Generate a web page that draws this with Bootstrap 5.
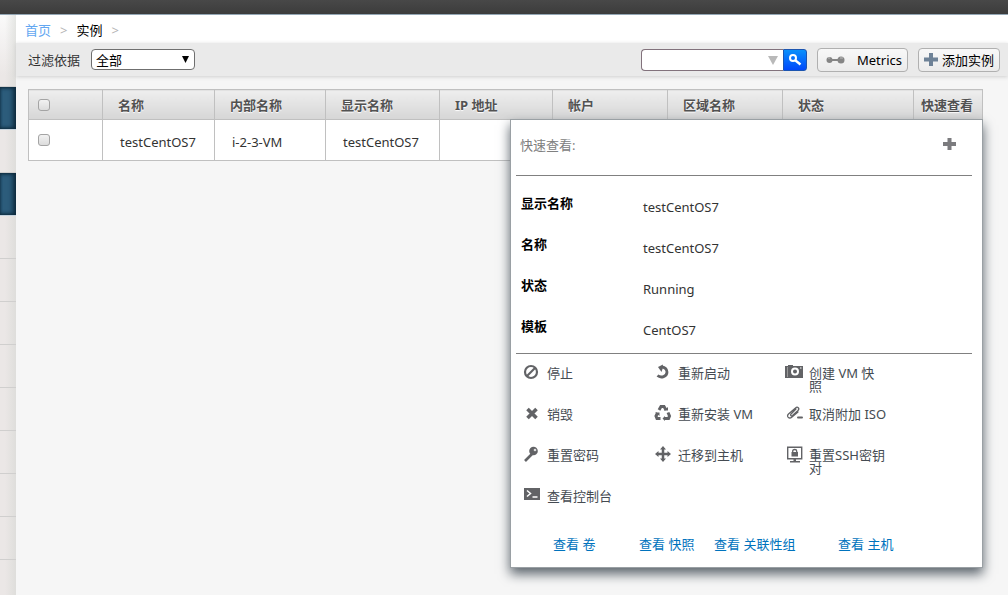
<!DOCTYPE html>
<html lang="zh-CN">
<head>
<meta charset="utf-8">
<meta name="viewport" content="width=device-width, initial-scale=1">
<title>实例</title>
<link href="https://cdn.jsdelivr.net/npm/bootstrap@5.3.0/dist/css/bootstrap.min.css" rel="stylesheet">
<style>
  body { font-family: "Noto Sans", "Noto Sans CJK SC", sans-serif; font-size: 13px; line-height: 18px; color: #333; background: #f6f6f6; }
  a { text-decoration: none; }
  .topbar { height: 15px; background: linear-gradient(#484848, #3c3c3c); border-bottom: 1px solid #93a6b4; }

  .sidebar { width: 16px; background: linear-gradient(90deg, transparent 5px, rgba(214,216,212,.6)), linear-gradient(#fafafa, #ebe7e6 60px); }
  .sidebar a { display: block; height: 43px; border-bottom: 1px solid #d0cfce; }
  .sidebar a:first-child { height: 72px; }
  .sidebar a.active { background: #2c5c7b; border-bottom-color: #c5d3de; box-shadow: inset -3px 0 5px #0e2b3d, inset 0 -1px 3px #16384d, inset 0 1px 3px #16384d; clip-path: inset(0); }

  .crumbs { height: 28px; padding: 2px 9px 0; background: #fff; gap: 9px; color: #b4b4b4; line-height: 26px; }
  .crumbs a { color: #63a7f1; }
  .crumbs .current { color: #000; }

  .toolbar { min-height: 33px; padding: 0 8px 0 12px; background: #eaeaea; box-shadow: 0 1px 4px #cfcfcf; }
  .filter { width: 104px; height: 21px; margin-left: 11px; padding: 0 20px 0 4px; font-size: 13px; line-height: 18px; color: #000; border: 1px solid #6f6f6f; border-radius: 4px;
    background: #fff url("data:image/svg+xml,%3Csvg xmlns='http://www.w3.org/2000/svg' viewBox='0 0 8 8'%3E%3Cpath d='M0 0h8L4 8z'/%3E%3C/svg%3E") no-repeat right 5px center / 7px 7px; }
  .search { position: relative; width: 166px; height: 22px; }
  .search input { height: 22px; min-width: 0; padding: 0 24px 0 6px; font-size: 13px; border: 1px solid #82727c; border-right: 0; border-radius: 4px 0 0 4px; }
  .search .options { position: absolute; right: 29px; top: 1px; height: 22px; padding: 0; border: 0; background: none; line-height: 0; z-index: 6; }
  .search .go { width: 24px; height: 22px; flex: none; padding: 0; border: 1px solid #1c55b0; border-radius: 0 3px 3px 0; background: linear-gradient(#0a90fb, #0048fb); line-height: 0; }
  .tool-btn { height: 24px; margin-left: 10px; padding: 0 5px; border: 1px solid #b0b0b0; border-radius: 4px; background: linear-gradient(#f8f8f8, #ebebeb); color: #000; line-height: 22px; }
  .metrics { padding-left: 8px; gap: 12px; }

  .list-area { padding: 13px 25px 24px 12px; }
  .grid-table { table-layout: fixed; border: 1px solid #c0c0c0; }
  .grid-table th, .grid-table td { border: 1px solid #c0c0c0; white-space: nowrap; }
  .grid-table th { height: 30px; padding: 1px 0 0 15px; color: #525252; background: linear-gradient(#eeeeee, #d6d6d6); text-shadow: 0 1px 1px #fff; }
  .grid-table th:last-child { padding-left: 7px; }
  .grid-table td { height: 41px; padding: 3px 0 0 17px; background: #fff; }
  .grid-table .pick { padding: 0 0 0 9px; }
  .grid-table .form-check-input { display: block; width: 12px; height: 12px; margin: 0; border: 1px solid #a4a4a4; border-radius: 3px; background: linear-gradient(#f2f2f2, #dcdcdc); }

  .quick { position: absolute; right: 25px; top: 43px; width: 473px; padding: 0 10px 0 5px; background: #fff; border: 1px solid #9aa0a4; box-shadow: 0 6px 11px #5b646c; z-index: 10; }
  .quick-head { height: 56px; padding: 0 15px 6px 4px; border-bottom: 1px solid #808080; color: #808080; }
  .quick-head button { padding: 0; border: 0; background: none; line-height: 0; }
  .facts { padding: 8px 5px 5px; border-bottom: 1px solid #808080; }
  .facts dt { width: 122px; padding-top: 10px; color: #000; }
  .facts dd { height: 41px; padding-top: 14px; }
  .actions { display: grid; grid-template-columns: repeat(3, 131px); grid-auto-rows: 41px; padding: 9px 0 0 7px; }
  .actions button { gap: 6px; padding: 0; border: 0; background: none; color: #454b52; text-align: left; line-height: 13px; }
  .actions svg { width: 18px; height: 18px; flex: none; color: #626366; }
  .actions span { width: 78px; padding-top: 4px; }
  .related { display: grid; grid-template-columns: 86px 75px 124px auto; padding: 8px 0 14px 37px; }
  .related a { color: #0073bd; }
</style>
</head>
<body class="d-flex flex-column min-vh-100">
<header class="topbar"></header>
<div class="d-flex flex-grow-1">
  <nav class="sidebar flex-shrink-0" aria-label="导航">
    <a href="#"></a><a href="#" class="active"></a><a href="#"></a><a href="#" class="active"></a><a href="#"></a><a href="#"></a><a href="#"></a><a href="#"></a><a href="#"></a><a href="#"></a><a href="#"></a><a href="#"></a>
  </nav>
  <main class="flex-grow-1">
    <nav class="crumbs d-flex"><a href="#">首页</a><span>&gt;</span><span class="current">实例</span><span>&gt;</span></nav>
    <div class="toolbar d-flex align-items-center position-relative">
      <label for="filter">过滤依据</label>
      <select id="filter" class="form-select filter"><option>全部</option></select>
      <div class="search d-flex ms-auto">
        <input type="text" class="form-control" aria-label="搜索">
        <button type="button" class="options" aria-label="高级搜索"><svg width="10" height="9" viewBox="0 0 10 9"><path d="M0 0h10L5 9z" fill="#b9b9b9"/></svg></button>
        <button type="button" class="go" aria-label="查找"><svg width="14" height="14" viewBox="0 0 14 14" fill="none" stroke="#fff"><circle cx="5" cy="5" r="3" stroke-width="2"/><path d="M7.500 7.500l5 4" stroke-width="2.500"/></svg></button>
      </div>
      <button type="button" class="tool-btn metrics d-flex align-items-center">
        <svg width="19" height="10" viewBox="0 0 19 10" fill="#858585"><circle cx="3.500" cy="5" r="3"/><circle cx="15" cy="5" r="3.500"/><path d="M5 4h7v2H5z"/><path d="M2 3h2M14 3h3" stroke="#bbb"/></svg>
        <span>Metrics</span>
      </button>
      <button type="button" class="tool-btn d-flex align-items-center gap-1">
        <svg width="14" height="14" viewBox="0 0 14 14" fill="#6e8297"><path d="M5 0h4v4.500h5v4H9V13H5V8.500H0v-4h5z"/></svg>
        <span>添加实例</span>
      </button>
    </div>
    <div class="list-area position-relative">
      <table class="grid-table w-100">
        <colgroup><col style="width:74px"><col style="width:112px"><col style="width:111px"><col style="width:114px"><col style="width:113px"><col style="width:115px"><col style="width:115px"><col style="width:131px"><col></colgroup>
        <thead><tr><th class="pick"><input type="checkbox" class="form-check-input" aria-label="全选"></th><th>名称</th><th>内部名称</th><th>显示名称</th><th>IP 地址</th><th>帐户</th><th>区域名称</th><th>状态</th><th>快速查看</th></tr></thead>
        <tbody><tr><td class="pick"><input type="checkbox" class="form-check-input" aria-label="选择 testCentOS7"></td><td>testCentOS7</td><td>i-2-3-VM</td><td>testCentOS7</td><td></td><td></td><td></td><td></td><td></td></tr></tbody>
      </table>
      <section class="quick">
        <div class="quick-head d-flex align-items-center justify-content-between">
          <span>快速查看:</span>
          <button type="button" aria-label="展开"><svg width="15" height="14" viewBox="0 0 15 14" fill="#7b7b7e"><path d="M5.500 0h4v4H14v4H9.500v4h-4V8H1V4h4.500z"/></svg></button>
        </div>
        <dl class="facts mb-0">
          <div class="d-flex"><dt>显示名称</dt><dd class="mb-0">testCentOS7</dd></div>
          <div class="d-flex"><dt>名称</dt><dd class="mb-0">testCentOS7</dd></div>
          <div class="d-flex"><dt>状态</dt><dd class="mb-0">Running</dd></div>
          <div class="d-flex"><dt>模板</dt><dd class="mb-0">CentOS7</dd></div>
        </dl>
        <div class="actions">
          <button type="button" class="d-flex"><svg viewBox="0 0 18 18" fill="none" stroke="currentColor" stroke-width="2.200"><circle cx="8" cy="9" r="6"/><path d="M4 13l8-8"/></svg><span>停止</span></button>
          <button type="button" class="d-flex"><svg viewBox="0 0 18 18"><path d="M3.500 12.500C7 15.500 13 13.500 13 9c0-3-2.500-5-5.500-5" fill="none" stroke="currentColor" stroke-width="2.800"/><path d="M9 1.500L4 4l3.500 5 1-3z" fill="currentColor"/></svg><span>重新启动</span></button>
          <button type="button" class="d-flex"><svg viewBox="0 0 18 18"><path d="M0 3h3V2h5v1h10v12H0z" fill="currentColor"/><path d="M2.500 4v10" stroke="#999"/><circle cx="10" cy="8.500" r="3" fill="currentColor" stroke="#fff" stroke-width="2"/><path d="M15 5h1.500" stroke="#fff"/></svg><span>创建 VM 快照</span></button>
          <button type="button" class="d-flex"><svg viewBox="0 0 18 18"><path d="M4.500 5l9 9M13.500 5l-9 9" stroke="currentColor" stroke-width="3.600"/></svg><span>销毁</span></button>
          <button type="button" class="d-flex"><svg viewBox="0 0 18 18" fill="none" stroke="currentColor" stroke-width="3"><path d="M5 6l2-3.500h3L12 6M14 8.500l1.500 3.500-1 2.500H11M6.500 14.500H3L2 12l1.500-3"/><path d="M10 6.500h4V3zM11 12v5l-2.500-2.500zM1 8.500h4.500V12z" fill="currentColor" stroke="none"/></svg><span>重新安装 VM</span></button>
          <button type="button" class="d-flex"><svg viewBox="0 0 18 18" fill="none" stroke="currentColor" stroke-width="1.300" stroke-linecap="round"><path d="M11 5l-5 5c-1 1 0 2.500 1.500 1.500L13 6.500C15 4.500 12.500 2 10.500 4l-7 6c-2.500 2.500.500 5.500 3.500 3l6-5"/><path d="M13 13.500h4" stroke-width="2"/></svg><span>取消附加 ISO</span></button>
          <button type="button" class="d-flex"><svg viewBox="0 0 18 18"><path d="M9 9l-7 7" stroke="currentColor" stroke-width="2.600"/><circle cx="10.500" cy="6" r="4.300" fill="currentColor"/><circle cx="12" cy="5" r="1.300" fill="#ddd"/></svg><span>重置密码</span></button>
          <button type="button" class="d-flex"><svg viewBox="0 0 18 18"><path d="M9 3v12M3 9h12" stroke="currentColor" stroke-width="2.500"/><path d="M9 1l3 3.500H6zM9 17l3-3.500H6zM1 9l3.500-3v6zM17 9l-3.500-3v6z" fill="currentColor"/></svg><span>迁移到主机</span></button>
          <button type="button" class="d-flex"><svg viewBox="0 0 18 18"><path d="M2.700 2.200h14v11.600h-14z" fill="none" stroke="currentColor" stroke-width="1.400"/><path d="M6.500 7h6.500v4.500H6.500zM8.500 14h2.500v2H8.500zM5 16h10v1.500H5z" fill="currentColor"/><path d="M7.700 7.500V6c0-2 4-2 4 0v1.500" fill="none" stroke="currentColor" stroke-width="1.300"/></svg><span>重置SSH密钥对</span></button>
          <button type="button" class="d-flex"><svg viewBox="0 0 18 18"><path d="M1 2h16v12H1z" fill="currentColor"/><path d="M4 4.500L7.500 7.500 4 10.500M9.500 11h5" fill="none" stroke="#fff" stroke-width="1.500"/></svg><span>查看控制台</span></button>
        </div>
        <div class="related"><a href="#">查看 卷</a><a href="#">查看 快照</a><a href="#">查看 关联性组</a><a href="#">查看 主机</a></div>
      </section>
    </div>
  </main>
</div>
<script src="https://cdn.jsdelivr.net/npm/bootstrap@5.3.0/dist/js/bootstrap.bundle.min.js"></script>
</body>
</html>
